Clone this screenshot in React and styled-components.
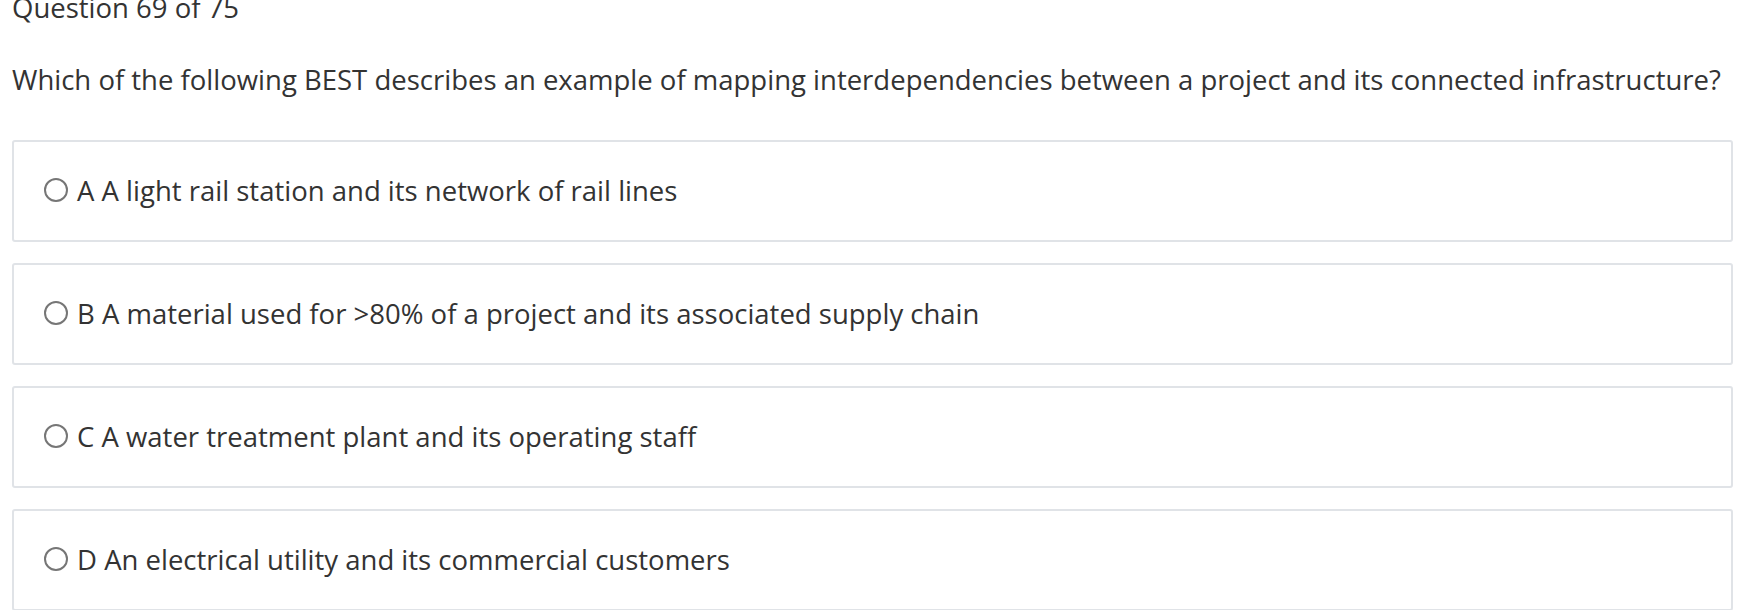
import React from "react";
import styled, { createGlobalStyle } from "styled-components";

const GlobalStyle = createGlobalStyle`
  html, body {
    margin: 0;
    padding: 0;
    background: #ffffff;
    overflow: hidden;
  }
  body {
    font-family: "Open Sans", "Noto Sans", sans-serif;
    color: #333333;
  }
`;

const options = [
  { key: "A", text: "A light rail station and its network of rail lines" },
  { key: "B", text: "A material used for >80% of a project and its associated supply chain" },
  { key: "C", text: "A water treatment plant and its operating staff" },
  { key: "D", text: "An electrical utility and its commercial customers" },
];

export default function App() {
  return (
    <>
      <GlobalStyle />
      <Page>
        <Counter>Question 69 of 75</Counter>
        <Prompt>
          Which of the following BEST describes an example of mapping
          interdependencies between a project and its connected infrastructure?
        </Prompt>
        <OptionList>
          {options.map((o) => (
            <Option key={o.key}>
              <Radio type="radio" name="answer" value={o.key} />
              <OptionText>
                {o.key} {o.text}
              </OptionText>
            </Option>
          ))}
        </OptionList>
      </Page>
    </>
  );
}

const Page = styled.div`
  width: 1721px;
  padding-left: 12px;
  margin-top: -12px;
  font-size: 27.5px;
  line-height: 40.5px;
`;

const Counter = styled.div`
  margin: 0;
`;

const Prompt = styled.div`
  margin-top: 31px;
  white-space: nowrap;
`;

const OptionList = styled.div`
  display: flex;
  flex-direction: column;
  gap: 21px;
  margin-top: 40px;
`;

const Option = styled.label`
  display: flex;
  align-items: center;
  height: 102px;
  box-sizing: border-box;
  padding: 0 28px 0 30px;
  border: 2px solid #e0e3e7;
  border-radius: 3px;
  background: #ffffff;
  cursor: pointer;
`;

const Radio = styled.input`
  appearance: none;
  -webkit-appearance: none;
  box-sizing: border-box;
  width: 24px;
  height: 24px;
  margin: 0 9px 3px 0;
  border: 2px solid #767676;
  border-radius: 50%;
  background: #ffffff;
  flex-shrink: 0;
  cursor: pointer;
`;

const OptionText = styled.span`
  line-height: 40px;
`;
